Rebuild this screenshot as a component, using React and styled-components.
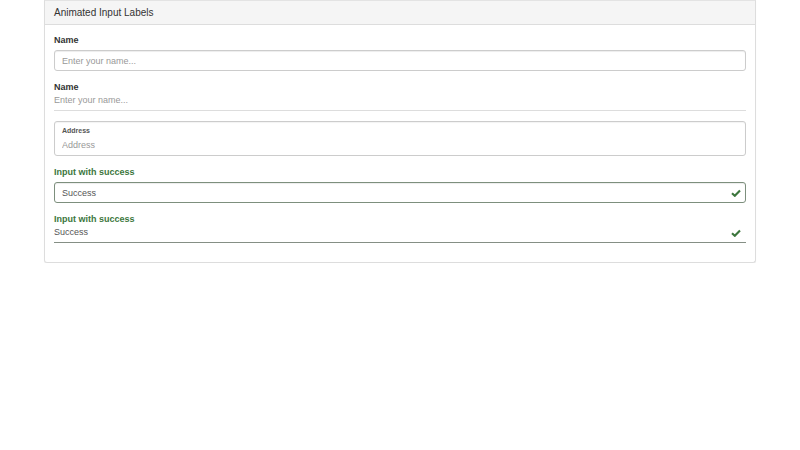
import React from 'react'
import styled, { createGlobalStyle } from 'styled-components'

const GlobalStyle = createGlobalStyle`
  body {
    margin: 0;
    background: #fff;
    font-family: "Liberation Sans", Arial, sans-serif;
    color: #333;
  }
`

const Page = styled.div`
  padding: 0 44px;
`

const Panel = styled.div`
  border: 1px solid #ddd;
  border-top-color: #e3e3e3;
  border-radius: 0 0 3px 3px;
  background: #fff;
  box-shadow: 0 1px 1px rgba(0, 0, 0, 0.05);
`

const PanelHeading = styled.div`
  height: 24px;
  box-sizing: border-box;
  padding: 0 9px;
  display: flex;
  align-items: center;
  background: #f5f5f5;
  border-bottom: 1px solid #ddd;
  font-size: 10px;
  color: #333;
`

const PanelBody = styled.div`
  padding: 9px 9px 9px;
`

const Group = styled.div`
  margin-bottom: 10px;
`

const Label = styled.label`
  display: block;
  font-size: 9px;
  line-height: 12px;
  font-weight: bold;
  margin-bottom: ${p => (p.flush ? '0' : '4px')};
  color: ${p => (p.success ? '#3c763d' : '#333')};
`

const Field = styled.div`
  position: relative;
`

const BoxInput = styled.input`
  display: block;
  width: 100%;
  height: 21px;
  box-sizing: border-box;
  padding: 0 7px;
  font-family: inherit;
  font-size: 9px;
  color: #555;
  border: 1px solid ${p => (p.success ? '#7d8f7d' : '#ccc')};
  border-radius: 3px;
  outline: none;
  box-shadow: inset 0 1px 1px rgba(0, 0, 0, 0.075);
  &::placeholder { color: #999; }
`

const LineInput = styled.input`
  display: block;
  width: 100%;
  height: 18px;
  box-sizing: border-box;
  padding: 0 0 3px;
  line-height: 14px;
  font-family: inherit;
  font-size: 9px;
  color: #555;
  border: none;
  border-bottom: 1px solid ${p => (p.success ? '#858f85' : '#ddd')};
  outline: none;
  background: transparent;
  &::placeholder { color: #999; }
`

const FloatBox = styled.div`
  border: 1px solid #ccc;
  border-radius: 3px;
  height: 35px;
  box-sizing: border-box;
  padding: 4px 7px 0;
  box-shadow: inset 0 1px 1px rgba(0, 0, 0, 0.05);
`

const SmallLabel = styled.label`
  display: block;
  font-size: 7px;
  line-height: 9px;
  font-weight: bold;
  color: #555;
`

const FloatInput = styled.input`
  display: block;
  width: 100%;
  border: none;
  outline: none;
  padding: 0;
  margin-top: 4px;
  font-family: inherit;
  font-size: 9px;
  line-height: 12px;
  color: #555;
  &::placeholder { color: #999; }
`

const Check = styled.svg`
  position: absolute;
  right: ${p => p.right}px;
  top: ${p => p.top}px;
  width: 10px;
  height: 8px;
`

const CheckIcon = props => (
  <Check viewBox="0 0 10 8" {...props}>
    <path d="M1 4.2 L3.8 6.8 L9 1.4" fill="none" stroke="#3c763d" strokeWidth="2.1" />
  </Check>
)

const App = () => (
  <Page>
    <GlobalStyle />
    <Panel>
      <PanelHeading>Animated Input Labels</PanelHeading>
      <PanelBody>
        <Group>
          <Label>Name</Label>
          <BoxInput placeholder="Enter your name..." />
        </Group>
        <Group>
          <Label flush>Name</Label>
          <LineInput placeholder="Enter your name..." />
        </Group>
        <Group>
          <FloatBox>
            <SmallLabel>Address</SmallLabel>
            <FloatInput placeholder="Address" />
          </FloatBox>
        </Group>
        <Group>
          <Label success>Input with success</Label>
          <Field>
            <BoxInput success defaultValue="Success" />
            <CheckIcon right={5} top={7} />
          </Field>
        </Group>
        <Group>
          <Label success flush>Input with success</Label>
          <Field>
            <LineInput success defaultValue="Success" />
            <CheckIcon right={5} top={4} />
          </Field>
        </Group>
      </PanelBody>
    </Panel>
  </Page>
)

export default App
